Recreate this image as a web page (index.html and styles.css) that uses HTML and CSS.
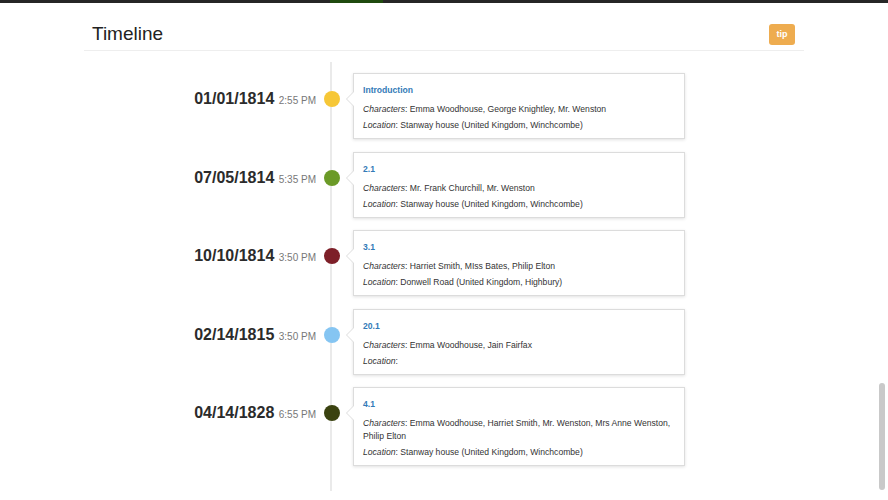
FILE: index.html
```html
<!DOCTYPE html>
<html>
<head>
<meta charset="utf-8">
<link rel="stylesheet" href="styles.css">
</head>
<body>
<div class="topbar"><div class="topbar-accent"></div></div>
<div class="container">
  <header class="page-header">
    <h1 class="title">Timeline</h1>
    <button class="tip-btn">tip</button>
  </header>
  <div class="timeline">
    <div class="event">
      <div class="when"><span class="date">01/01/1814</span> <span class="time">2:55 PM</span></div>
      <div class="dot dot-yellow"></div>
      <div class="card">
        <a class="card-title">Introduction</a>
        <p class="line"><em>Characters</em>: Emma Woodhouse, George Knightley, Mr. Wenston</p>
        <p class="line"><em>Location</em>: Stanway house (United Kingdom, Winchcombe)</p>
      </div>
    </div>
    <div class="event">
      <div class="when"><span class="date">07/05/1814</span> <span class="time">5:35 PM</span></div>
      <div class="dot dot-green"></div>
      <div class="card">
        <a class="card-title">2.1</a>
        <p class="line"><em>Characters</em>: Mr. Frank Churchill, Mr. Wenston</p>
        <p class="line"><em>Location</em>: Stanway house (United Kingdom, Winchcombe)</p>
      </div>
    </div>
    <div class="event">
      <div class="when"><span class="date">10/10/1814</span> <span class="time">3:50 PM</span></div>
      <div class="dot dot-red"></div>
      <div class="card">
        <a class="card-title">3.1</a>
        <p class="line"><em>Characters</em>: Harriet Smith, MIss Bates, Philip Elton</p>
        <p class="line"><em>Location</em>: Donwell Road (United Kingdom, Highbury)</p>
      </div>
    </div>
    <div class="event">
      <div class="when"><span class="date">02/14/1815</span> <span class="time">3:50 PM</span></div>
      <div class="dot dot-blue"></div>
      <div class="card">
        <a class="card-title">20.1</a>
        <p class="line"><em>Characters</em>: Emma Woodhouse, Jain Fairfax</p>
        <p class="line"><em>Location</em>:</p>
      </div>
    </div>
    <div class="event">
      <div class="when"><span class="date">04/14/1828</span> <span class="time">6:55 PM</span></div>
      <div class="dot dot-olive"></div>
      <div class="card">
        <a class="card-title">4.1</a>
        <p class="line"><em>Characters</em>: Emma Woodhouse, Harriet Smith, Mr. Wenston, Mrs Anne Wenston, Philip Elton</p>
        <p class="line"><em>Location</em>: Stanway house (United Kingdom, Winchcombe)</p>
      </div>
    </div>
  </div>
</div>
<div class="scroll-thumb"></div>
</body>
</html>
```
FILE: styles.css
```css
html, body {
  margin: 0;
  padding: 0;
  background: #fff;
  overflow: hidden;
}
body {
  font-family: "Liberation Sans", Arial, sans-serif;
  color: #333;
}
.topbar {
  height: 3px;
  background: #262626;
  display: flex;
  padding-left: 330px;
}
.topbar-accent {
  width: 53px;
  height: 3px;
  background: #1f4a0e;
}
.container {
  width: 720px;
  margin: 0 auto;
}
.page-header {
  display: flex;
  align-items: center;
  justify-content: space-between;
  padding: 20px 9px 5px 8px;
  border-bottom: 1px solid #eeeeee;
}
.title {
  margin: 0;
  font-size: 19px;
  line-height: 22px;
  font-weight: normal;
  color: #222;
}
.tip-btn {
  width: 26px;
  height: 21px;
  border: none;
  border-radius: 3px;
  background: #eeac4f;
  color: #fff;
  font-family: "Liberation Sans", Arial, sans-serif;
  font-size: 9px;
  font-weight: bold;
  padding: 0;
}
.timeline {
  position: relative;
  margin-top: 11px;
  padding: 11px 0 25px;
}
.timeline::before {
  content: "";
  position: absolute;
  top: 0;
  bottom: 0;
  left: 246px;
  width: 2px;
  background: #eaeaea;
}
.event {
  position: relative;
  display: flex;
  align-items: flex-start;
  margin-bottom: 12.5px;
}
.event:last-child {
  margin-bottom: 0;
}
.when {
  width: 232px;
  padding-right: 8px;
  text-align: right;
  margin-top: 16px;
  line-height: 20px;
  white-space: nowrap;
}
.date {
  font-size: 16px;
  font-weight: bold;
  color: #2b2b2b;
}
.time {
  font-size: 10px;
  color: #777;
}
.dot {
  position: relative;
  width: 16px;
  height: 16px;
  border-radius: 50%;
  margin-top: 18px;
  flex: none;
}
.dot-yellow { background: #f6c737; }
.dot-green { background: #6b9a27; }
.dot-red { background: #7d1f28; }
.dot-blue { background: #85c5f2; }
.dot-olive { background: #3a4210; }
.card {
  position: relative;
  width: 312px;
  margin-left: 13px;
  padding: 10px 9px 0;
  border: 1px solid #dcdcdc;
  background: #fff;
  box-shadow: 0 1px 3px rgba(0, 0, 0, 0.12);
  font-size: 8.6px;
}
.card::before {
  content: "";
  position: absolute;
  left: -8px;
  top: 17px;
  border-style: solid;
  border-width: 8px 8px 8px 0;
  border-color: transparent #dcdcdc transparent transparent;
}
.card::after {
  content: "";
  position: absolute;
  left: -7px;
  top: 17px;
  border-style: solid;
  border-width: 8px 8px 8px 0;
  border-color: transparent #fff transparent transparent;
}
.card-title {
  display: block;
  font-weight: bold;
  color: #337ab7;
  line-height: 13px;
  margin-bottom: 6px;
}
.line {
  margin: 0 0 3px;
  line-height: 13px;
}
.line + .line {
  margin-top: 0;
  margin-bottom: 6px;
}
.scroll-thumb {
  position: fixed;
  right: 3px;
  top: 383px;
  width: 6px;
  height: 107px;
  border-radius: 3px;
  background: #c9c9c9;
}
```
